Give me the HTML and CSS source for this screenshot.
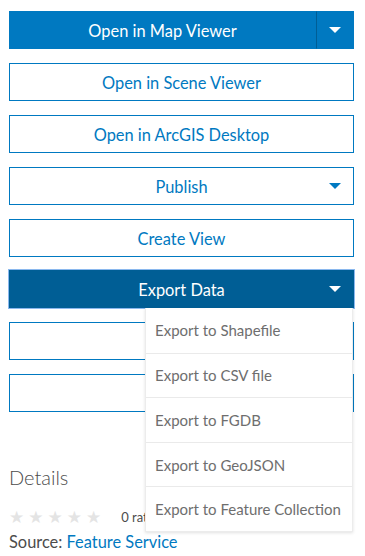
FILE: index.html
```html
<!DOCTYPE html>
<html lang="en">
<head>
<meta charset="utf-8">
<link rel="stylesheet" href="styles.css">
</head>
<body>
<div class="panel">
  <div class="actions">
    <div class="split">
      <button class="btn btn-solid split-main">Open in Map Viewer</button>
      <button class="btn btn-solid split-toggle" aria-label="More"><span class="caret caret-white"></span></button>
    </div>
    <button class="btn btn-outline">Open in Scene Viewer</button>
    <button class="btn btn-outline">Open in ArcGIS Desktop</button>
    <button class="btn btn-outline btn-dd">Publish<span class="caret caret-blue"></span></button>
    <button class="btn btn-outline">Create View</button>
    <div class="dd-wrap">
      <button class="btn btn-dark btn-dd">Export Data<span class="caret caret-white"></span></button>
      <ul class="menu">
        <li>Export to Shapefile</li>
        <li>Export to CSV file</li>
        <li>Export to FGDB</li>
        <li>Export to GeoJSON</li>
        <li>Export to Feature Collection</li>
      </ul>
    </div>
    <button class="btn btn-outline" aria-label="Update"></button>
    <button class="btn btn-outline" aria-label="Share"></button>
  </div>

  <section class="details">
    <h2 class="details-title">Details</h2>
    <div class="rating">
      <span class="stars">★★★★★</span>
      <span class="rating-count">0 ratings</span>
    </div>
    <p class="source">Source: <a class="link">Feature Service</a></p>
  </section>
</div>
</body>
</html>
```

FILE: styles.css
```css
* { box-sizing: border-box; }
html, body { margin: 0; padding: 0; background: #fff; }
body {
  font-family: Lato, "Open Sans", "Noto Sans", sans-serif;
  color: #4c4c4c;
  overflow: hidden;
  height: 556px;
}
.panel { padding: 11px 11px 0 9px; }
.actions { display: flex; flex-direction: column; gap: 14px; }
.btn {
  display: flex;
  align-items: center;
  justify-content: center;
  height: 38px;
  width: 100%;
  margin: 0;
  padding: 0 12px;
  font: inherit;
  font-size: 16.4px;
  border: 1px solid #0079c1;
  border-radius: 0;
  background: #fff;
  color: #0079c1;
  position: relative;
}
.btn-solid { background: #0079c1; color: #fff; }
.btn-dark {
  background: #005e95;
  border-color: #005e95;
  color: #fff;
  outline: 1px solid #8ab8ee;
  outline-offset: 0;
}
.split { display: flex; height: 38px; }
.split .btn { height: 38px; }
.split-main { flex: 1; }
.split-toggle { width: 38px; flex: none; border-left: 1px solid #005e95; padding: 0; }
.caret {
  width: 0; height: 0;
  border-left: 6px solid transparent;
  border-right: 6px solid transparent;
  border-top: 6px solid #fff;
}
.caret-white { border-top-color: #fff; }
.caret-blue { border-top-color: #0079c1; }
.btn-dd .caret { position: absolute; right: 12px; top: 15px; }
.dd-wrap { position: relative; margin-top: -1px; }
.menu {
  position: absolute;
  top: 100%;
  right: 1px;
  width: 208px;
  margin: 0;
  padding: 0;
  list-style: none;
  background: #fff;
  border: 1px solid #ececec;
  border-top: none;
  box-shadow: 0 1px 3px rgba(0,0,0,0.12);
  z-index: 5;
}
.menu li {
  height: 44.6px;
  display: flex;
  align-items: center;
  padding-left: 9px;
  font-size: 15px;
  color: #6e6e6e;
  border-top: 1px solid #eaeaea;
  white-space: nowrap;
}
.menu li:first-child { border-top: none; }
.details { margin-top: 52px; }
.details-title {
  margin: 0;
  font-size: 20px;
  font-weight: 300;
  color: #4c4c4c;
  line-height: 26px;
}
.rating { display: flex; align-items: center; margin-top: 17px; height: 20px; }
.stars { color: #e4e4e4; font-size: 17px; letter-spacing: 4px; font-family: "DejaVu Sans", sans-serif; }
.rating-count { margin-left: 16px; font-size: 13px; color: #4c4c4c; }
.source { margin: 5px 0 0; font-size: 16.4px; color: #4c4c4c; }
.link { color: #0079c1; }
```
